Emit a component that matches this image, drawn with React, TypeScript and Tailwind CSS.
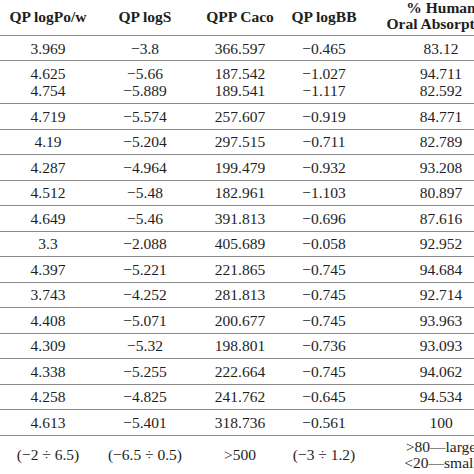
const rows: string[][][] = [
  [["3.969"], ["−3.8"], ["366.597"], ["−0.465"], ["83.12"]],
  [
    ["4.625", "4.754"],
    ["−5.66", "−5.889"],
    ["187.542", "189.541"],
    ["−1.027", "−1.117"],
    ["94.711", "82.592"],
  ],
  [["4.719"], ["−5.574"], ["257.607"], ["−0.919"], ["84.771"]],
  [["4.19"], ["−5.204"], ["297.515"], ["−0.711"], ["82.789"]],
  [["4.287"], ["−4.964"], ["199.479"], ["−0.932"], ["93.208"]],
  [["4.512"], ["−5.48"], ["182.961"], ["−1.103"], ["80.897"]],
  [["4.649"], ["−5.46"], ["391.813"], ["−0.696"], ["87.616"]],
  [["3.3"], ["−2.088"], ["405.689"], ["−0.058"], ["92.952"]],
  [["4.397"], ["−5.221"], ["221.865"], ["−0.745"], ["94.684"]],
  [["3.743"], ["−4.252"], ["281.813"], ["−0.745"], ["92.714"]],
  [["4.408"], ["−5.071"], ["200.677"], ["−0.745"], ["93.963"]],
  [["4.309"], ["−5.32"], ["198.801"], ["−0.736"], ["93.093"]],
  [["4.338"], ["−5.255"], ["222.664"], ["−0.745"], ["94.062"]],
  [["4.258"], ["−4.825"], ["241.762"], ["−0.645"], ["94.534"]],
  [["4.613"], ["−5.401"], ["318.736"], ["−0.561"], ["100"]],
];

const cols = "grid grid-cols-[96px_98px_92px_76px_158px]";

export default function App() {
  return (
    <div
      className="w-[474px] h-[474px] overflow-hidden bg-white text-[#1e1e1e]"
      style={{ fontFamily: '"Liberation Serif", "Times New Roman", serif' }}
    >
      <div className="w-[520px] text-[15.5px] leading-[17px]">
        {/* header */}
        <div className={`${cols} h-[36px] items-center text-center font-bold border-b-[1.5px] border-[#8a8a8a] pb-[3px]`}>
          <div>QP logPo/w</div>
          <div>QP logS</div>
          <div>QPP Caco</div>
          <div>QP logBB</div>
          <div className="leading-[16px]">
            <div>% Human</div>
            <div>Oral Absorption</div>
          </div>
        </div>

        {rows.map((row, i) => (
          <div
            key={i}
            className={`${cols} items-center text-center border-b-[1.5px] border-[#8a8a8a] ${
              i === 0 ? "h-[25px]" : i === 1 ? "h-[43px]" : "h-[25.5px]"
            }`}
          >
            {row.map((cell, j) => (
              <div key={j}>
                {cell.map((v) => (
                  <div key={v}>{v}</div>
                ))}
              </div>
            ))}
          </div>
        ))}

        {/* reference ranges */}
        <div className={`${cols} h-[38px] items-center text-center`}>
          <div>(−2 ÷ 6.5)</div>
          <div>(−6.5 ÷ 0.5)</div>
          <div>&gt;500</div>
          <div>(−3 ÷ 1.2)</div>
          <div className="leading-[16px]">
            <div>&gt;80—large</div>
            <div>&lt;20—small</div>
          </div>
        </div>
      </div>
    </div>
  );
}
